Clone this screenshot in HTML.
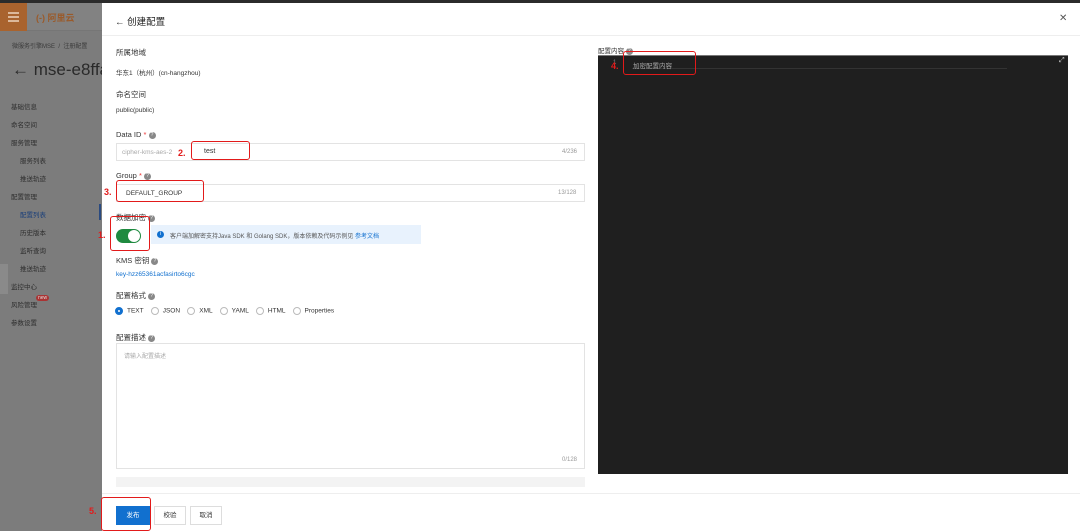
<!DOCTYPE html>
<html><head><meta charset="utf-8"><style>
*{box-sizing:border-box;margin:0;padding:0}
body{width:1080px;height:531px;overflow:hidden;position:relative;background:#7c7c7c;font-family:"Liberation Sans","Noto Sans CJK SC",sans-serif;font-size:7px;color:#333}
.a{position:absolute}
.top{left:0;top:0;width:1080px;height:3px;background:#2b2b2b}
.hdr{left:0;top:3px;width:102px;height:28px;background:#828282;border-bottom:1px solid #767676}
.burg{left:0;top:3px;width:27px;height:28px;background:#a9632e}
.side{color:#2e2e2e;font-size:6.5px}
.drawer{left:102px;top:3px;width:978px;height:528px;background:#fff}
.lbl{font-size:7.5px;color:#333}
.inp{border:1px solid #e3e3e3;background:#fff;height:18px}
.red{border:1.5px solid #e21a1a;border-radius:3px}
.num{color:#e21a1a;font-weight:bold;font-size:9px}
.q{display:inline-block;width:7px;height:7px;border-radius:50%;background:#888;color:#fff;font-size:5px;text-align:center;line-height:7px;vertical-align:middle}
.radio{display:inline-block;width:8px;height:8px;border:1px solid #bbb;border-radius:50%;vertical-align:middle;margin-right:4px}
.btn{height:19px;border:1px solid #ddd;background:#fff;font-size:6.5px;text-align:center;line-height:17px}
</style></head><body>
<div class="a top"></div>
<div class="a hdr"></div>
<div class="a burg"><div class="a" style="left:8px;top:9px;width:11px;height:1.5px;background:#dcb89a;box-shadow:0 4px 0 #dcb89a,0 8px 0 #dcb89a"></div></div>
<div class="a" style="left:36px;top:11px;color:#9a5a2a;font-size:9px;font-weight:bold">(-) 阿里云</div>
<div class="a side" style="left:12px;top:41px;color:#3a3a3a;font-size:6px">微服务引擎MSE &nbsp;/&nbsp; 注册配置</div>
<div class="a" style="left:12px;top:60px;font-size:17px;color:#2a2a2a">← mse-e8ffa</div>
<div class="a side" style="left:11px;top:101px">基础信息</div>
<div class="a side" style="left:11px;top:119px">命名空间</div>
<div class="a side" style="left:11px;top:137px">服务管理</div>
<div class="a side" style="left:20px;top:155px">服务列表</div>
<div class="a side" style="left:20px;top:173px">推送轨迹</div>
<div class="a side" style="left:11px;top:191px">配置管理</div>
<div class="a side" style="left:20px;top:209px;color:#1a3f7a">配置列表</div>
<div class="a" style="left:99px;top:204px;width:2px;height:16px;background:#2a4a80"></div>
<div class="a side" style="left:20px;top:227px">历史版本</div>
<div class="a side" style="left:20px;top:245px">监听查询</div>
<div class="a side" style="left:20px;top:263px">推送轨迹</div>
<div class="a side" style="left:11px;top:281px">监控中心</div>
<div class="a side" style="left:11px;top:299px">风险管理</div>
<div class="a" style="left:36px;top:295px;background:#a33;color:#ddd;font-size:5px;border-radius:4px;padding:0 2px">new</div>
<div class="a side" style="left:11px;top:317px">参数设置</div>
<div class="a" style="left:0;top:264px;width:8px;height:30px;background:#8a8a8a"></div>

<div class="a drawer">
 <div class="a" style="left:0;top:0;width:978px;height:33px;border-bottom:1px solid #eee"></div>
 <div class="a" style="left:13px;top:11px;font-size:9.5px;color:#222">← 创建配置</div>
 <div class="a" style="left:957px;top:10px;font-size:10px;color:#555">✕</div>

 <div class="a lbl" style="left:14px;top:44px">所属地域</div>
 <div class="a" style="left:14px;top:64px;font-size:6.5px">华东1（杭州）(cn-hangzhou)</div>
 <div class="a lbl" style="left:14px;top:86px">命名空间</div>
 <div class="a" style="left:14px;top:104px;font-size:6.5px">public(public)</div>
 <div class="a lbl" style="left:14px;top:127px">Data ID <span style="color:#e33">*</span> <span class="q">?</span></div>
 <div class="a inp" style="left:14px;top:140px;width:469px"></div>
 <div class="a" style="left:20px;top:146px;color:#aaa;font-size:6.5px">cipher-kms-aes-2</div>
 <div class="a" style="left:102px;top:145px;color:#333;font-size:7px">test</div>
 <div class="a" style="left:460px;top:146px;color:#999;font-size:6px">4/236</div>
 <div class="a lbl" style="left:14px;top:168px">Group <span style="color:#e33">*</span> <span class="q">?</span></div>
 <div class="a inp" style="left:14px;top:181px;width:469px"></div>
 <div class="a" style="left:24px;top:187px;font-size:6.5px">DEFAULT_GROUP</div>
 <div class="a" style="left:456px;top:187px;color:#999;font-size:6px">13/128</div>
 <div class="a lbl" style="left:14px;top:209px">数据加密 <span class="q">?</span></div>
 <div class="a" style="left:14px;top:226px;width:25px;height:14px;border-radius:7px;background:#1e8a3f"><div class="a" style="right:1px;top:1px;width:12px;height:12px;border-radius:50%;background:#fff"></div></div>
 <div class="a" style="left:49px;top:222px;width:270px;height:19px;background:#e8f2fd"></div>
 <div class="a" style="left:55px;top:228px;width:7px;height:7px;border-radius:50%;background:#1170cf;color:#fff;font-size:5px;text-align:center;line-height:7px">i</div>
 <div class="a" style="left:68px;top:228px;font-size:6px;color:#555">客户端加解密支持Java SDK 和 Golang SDK，版本依赖及代码示例见 <span style="color:#1170cf">参考文档</span></div>
 <div class="a lbl" style="left:14px;top:252px">KMS 密钥 <span class="q">?</span></div>
 <div class="a" style="left:14px;top:268px;font-size:6.5px;color:#1170cf">key-hzz65361acfasirto6cgc</div>
 <div class="a lbl" style="left:14px;top:287px">配置格式 <span class="q">?</span></div>
 <div class="a" style="left:13px;top:304px;font-size:6.5px;color:#333;white-space:nowrap">
  <span class="radio" style="border:3px solid #1170cf"></span>TEXT &nbsp;&nbsp;&nbsp;<span class="radio"></span>JSON &nbsp;&nbsp;&nbsp;<span class="radio"></span>XML &nbsp;&nbsp;&nbsp;<span class="radio"></span>YAML &nbsp;&nbsp;&nbsp;<span class="radio"></span>HTML &nbsp;&nbsp;&nbsp;<span class="radio"></span>Properties</div>
 <div class="a lbl" style="left:14px;top:329px">配置描述 <span class="q">?</span></div>
 <div class="a" style="left:14px;top:340px;width:469px;height:126px;border:1px solid #e3e3e3"></div>
 <div class="a" style="left:22px;top:348px;font-size:6px;color:#aaa">请输入配置描述</div>
 <div class="a" style="left:460px;top:454px;font-size:6px;color:#999">0/128</div>
 <div class="a" style="left:14px;top:474px;width:469px;height:10px;background:#f3f3f3"></div>
 <div class="a" style="left:0;top:490px;width:978px;height:1px;background:#eee"></div>
 <div class="a btn" style="left:14px;top:503px;width:34px;background:#1170cf;border-color:#1170cf;color:#fff">发布</div>
 <div class="a btn" style="left:52px;top:503px;width:32px">校验</div>
 <div class="a btn" style="left:88px;top:503px;width:32px">取消</div>

 <div class="a lbl" style="left:496px;top:42px;font-size:6.5px">配置内容 <span class="q">?</span></div>
 <div class="a" style="left:496px;top:52px;width:470px;height:419px;background:#1f1f1f"></div>
 <div class="a" style="left:496px;top:52px;width:470px;height:1px;background:#777"></div>
 <div class="a" style="left:511px;top:57px;font-size:6px;color:#888">1</div>
 <div class="a" style="left:530px;top:55px;width:375px;height:11px;border-bottom:1px solid #333"></div>
 <div class="a" style="left:531px;top:57px;font-size:6.5px;color:#aaa">加密配置内容</div>
 <div class="a" style="left:957px;top:54px;font-size:7px;color:#ccc">⤢</div>

 <div class="a red" style="left:89px;top:138px;width:59px;height:19px"></div>
 <div class="a num" style="left:76px;top:145px">2.</div>
 <div class="a red" style="left:14px;top:177px;width:88px;height:22px"></div>
 <div class="a num" style="left:2px;top:184px">3.</div>
 <div class="a red" style="left:8px;top:213px;width:40px;height:35px"></div>
 <div class="a num" style="left:-4px;top:227px">1.</div>
 <div class="a red" style="left:521px;top:48px;width:73px;height:24px"></div>
 <div class="a num" style="left:509px;top:58px">4.</div>
 <div class="a red" style="left:-1px;top:494px;width:50px;height:34px"></div>
 <div class="a num" style="left:-13px;top:503px">5.</div>
</div>
</body></html>
